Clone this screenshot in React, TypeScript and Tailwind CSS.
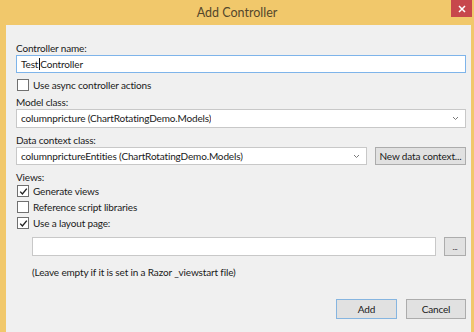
import React from 'react';

const font = { fontFamily: 'Lato, "Noto Sans", sans-serif' };

const Check = ({ checked }: { checked?: boolean }) => (
  <span className="flex h-[12px] w-[12px] shrink-0 items-center justify-center border border-[#707070] bg-white">
    {checked && (
      <svg width="9" height="9" viewBox="0 0 9 9">
        <path d="M1.2 4.6 L3.4 7 L7.8 1.6" fill="none" stroke="#222" strokeWidth="1.4" />
      </svg>
    )}
  </span>
);

const CheckRow = ({ label, checked }: { label: string; checked?: boolean }) => (
  <div className="flex h-[16px] items-center gap-[4px] pl-[1px]">
    <Check checked={checked} />
    <span>{label}</span>
  </div>
);

const Chevron = () => (
  <svg width="7" height="5" viewBox="0 0 7 5" className="shrink-0">
    <path d="M1 1 L3.5 3.5 L6 1" fill="none" stroke="#7a7a7a" strokeWidth="1" />
  </svg>
);

const Select = ({ value, className }: { value: string; className?: string }) => (
  <div
    className={`flex items-center justify-between border border-[#c8c8c8] bg-white pl-[4px] pr-[6px] ${className ?? ''}`}
  >
    <span className="truncate">{value}</span>
    <Chevron />
  </div>
);

const Button = ({ label, className }: { label: string; className?: string }) => (
  <div
    className={`flex items-center justify-center whitespace-nowrap border bg-[#e1e1e1] ${className ?? 'border-[#acacac]'}`}
  >
    {label}
  </div>
);

export default function App() {
  return (
    <div
      className="flex h-[332px] w-[474px] flex-col bg-[#f1c86b] text-[10px] tracking-[-0.15px] text-[#1a1a1a]"
      style={font}
    >
      <div className="relative flex h-[25px] shrink-0 items-center justify-center">
        <span className="pt-[1px] text-[12.5px] tracking-normal text-[#54472b]">Add Controller</span>
        <div className="absolute right-[2px] top-0 flex h-[17px] w-[21px] items-center justify-center bg-[#c7474c]">
          <svg width="8" height="8" viewBox="0 0 8 8">
            <path d="M1 1 L7 7 M7 1 L1 7" stroke="#fff" strokeWidth="1.5" />
          </svg>
        </div>
      </div>

      <div className="ml-[6px] mr-[3px] flex flex-1 flex-col bg-[#f0f0f0] pl-[10px] pr-[5px] pt-[16px]">
        <div className="flex h-[14px] items-center">Controller name:</div>
        <div className="flex h-[18px] items-center border border-[#7eb4ea] bg-white pl-[4px]">
          <span>Test</span>
          <span className="mx-[0.5px] h-[12px] w-[1px] bg-[#111]" />
          <span>Controller</span>
        </div>

        <div className="mt-[4px]">
          <CheckRow label="Use async controller actions" />
        </div>

        <div className="mt-[2px] flex h-[14px] items-center">Model class:</div>
        <Select value="columnpricture (ChartRotatingDemo.Models)" className="h-[19px]" />

        <div className="mt-[5px] flex h-[14px] items-center">Data context class:</div>
        <div className="flex gap-[8px]">
          <Select value="columnprictureEntities (ChartRotatingDemo.Models)" className="h-[18px] flex-1" />
          <Button label="New data context..." className="h-[18px] w-[91px] border-[#acacac]" />
        </div>

        <div className="mt-[6px] flex h-[12px] items-center">Views:</div>
        <CheckRow label="Generate views" checked />
        <CheckRow label="Reference script libraries" />
        <CheckRow label="Use a layout page:" checked />

        <div className="mt-[6px] flex gap-[8px] pl-[16px]">
          <div className="h-[19px] flex-1 border border-[#c8c8c8] bg-white" />
          <Button label="..." className="h-[19px] w-[22px] border-[#acacac] text-[8px]" />
        </div>
        <div className="mt-[9px] flex h-[14px] items-center pl-[16px]">
          (Leave empty if it is set in a Razor _viewstart file)
        </div>

        <div className="mt-[20px] flex justify-end gap-[9px]">
          <Button label="Add" className="h-[20px] w-[61px] border-[#86b5e0]" />
          <Button label="Cancel" className="h-[20px] w-[60px] border-[#acacac]" />
        </div>
      </div>
    </div>
  );
}
